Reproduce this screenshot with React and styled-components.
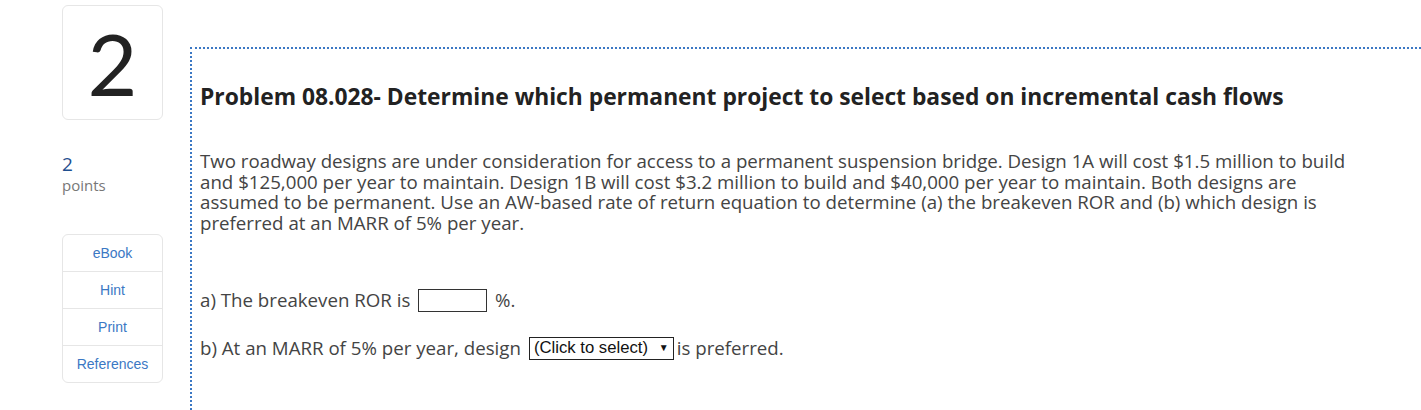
import styled, { createGlobalStyle } from "styled-components";

const GlobalStyle = createGlobalStyle`
  body {
    margin: 0;
    background: #fff;
    font-family: "Open Sans", Lato, sans-serif;
  }
`;

function App() {
    const links = ["eBook", "Hint", "Print", "References"];
    const lines = [
        "Two roadway designs are under consideration for access to a permanent suspension bridge. Design 1A will cost $1.5 million to build",
        "and $125,000 per year to maintain. Design 1B will cost $3.2 million to build and $40,000 per year to maintain. Both designs are",
        "assumed to be permanent. Use an AW-based rate of return equation to determine (a) the breakeven ROR and (b) which design is",
        "preferred at an MARR of 5% per year.",
    ];

    return (
        <StyledPage>
            <GlobalStyle />
            <StyledSide>
                <StyledNumberBox>2</StyledNumberBox>
                <StyledPoints>
                    <StyledPointValue>2</StyledPointValue>
                    <StyledPointLabel>points</StyledPointLabel>
                </StyledPoints>
                <StyledLinkList>
                    {links.map((label) => (
                        <StyledLinkRow key={label}>{label}</StyledLinkRow>
                    ))}
                </StyledLinkList>
            </StyledSide>
            <StyledQuestion>
                <StyledTitle>Problem 08.028- Determine which permanent project to select based on incremental cash flows</StyledTitle>
                <StyledText>
                    {lines.map((line) => (
                        <StyledLine key={line}>{line}</StyledLine>
                    ))}
                </StyledText>
                <StyledAnswer>
                    a) The breakeven ROR is <StyledInput type="text" /> %.
                </StyledAnswer>
                <StyledAnswer>
                    b) At an MARR of 5% per year, design{" "}
                    <StyledSelect>
                        (Click to select) <StyledArrow>▼</StyledArrow>
                    </StyledSelect>{" "}
                    is preferred.
                </StyledAnswer>
            </StyledQuestion>
        </StyledPage>
    );
}

const StyledPage = styled.div`
    display: flex;
    align-items: flex-start;
    padding: 5px 0 0 62px;
    height: 405px;
    overflow: hidden;
`;

const StyledSide = styled.aside`
    width: 101px;
    flex-shrink: 0;
    display: flex;
    flex-direction: column;
`;

const StyledNumberBox = styled.div`
    height: 113px;
    border: 1px solid #e6e6e6;
    border-radius: 6px;
    display: flex;
    align-items: center;
    justify-content: center;
    font-family: Lato, sans-serif;
    font-size: 86px;
    font-weight: 400;
    color: #222;
    line-height: 1;
`;

const StyledPoints = styled.div`
    margin-top: 33px;
    display: flex;
    flex-direction: column;
`;

const StyledPointValue = styled.span`
    color: #1f4f8f;
    font-size: 19px;
    line-height: 22px;
`;

const StyledPointLabel = styled.span`
    color: #777;
    font-size: 15px;
    line-height: 20px;
`;

const StyledLinkList = styled.div`
    margin-top: 39px;
    border: 1px solid #e6e6e6;
    border-radius: 6px;
`;

const StyledLinkRow = styled.div`
    height: 36px;
    display: flex;
    align-items: center;
    justify-content: center;
    color: #3b78c4;
    font-family: "Liberation Sans", Arial, sans-serif;
    font-size: 14px;
    & + & {
        border-top: 1px solid #e6e6e6;
    }
`;

const StyledQuestion = styled.main`
    flex: 1;
    margin-top: 42px;
    margin-left: 27px;
    height: 400px;
    border-top: 2px dotted #3b78c4;
    border-left: 2px dotted #3b78c4;
    padding: 33px 0 0 8px;
    color: #444;
`;

const StyledTitle = styled.h2`
    margin: 0 0 39px;
    font-size: 22.8px;
    font-weight: 700;
    color: #222;
    line-height: 30px;
`;

const StyledText = styled.div`
    margin: 0 0 55px;
    display: flex;
    flex-direction: column;
`;

const StyledLine = styled.span`
    display: block;
    height: 20.5px;
    font-size: 18.7px;
    line-height: 20.5px;
    white-space: nowrap;
`;

const StyledAnswer = styled.p`
    margin: 0 0 24px;
    font-size: 18.7px;
    line-height: 24px;
    display: flex;
    align-items: center;
    gap: 3px;
    white-space: pre;
`;

const StyledInput = styled.input`
    width: 69px;
    height: 23px;
    box-sizing: border-box;
    border: 1px solid #333;
    margin: 0;
    padding: 0;
`;

const StyledSelect = styled.span`
    width: 145px;
    height: 23px;
    box-sizing: border-box;
    border: 1px solid #222;
    display: inline-flex;
    align-items: center;
    justify-content: center;
    font-family: "Liberation Sans", Arial, sans-serif;
    font-size: 16.7px;
    color: #111;
`;

const StyledArrow = styled.span`
    font-size: 10px;
    margin-left: 6px;
`;

export default App;
